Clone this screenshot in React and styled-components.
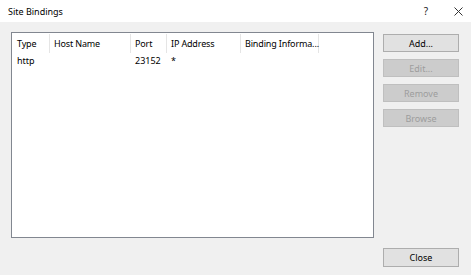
import styled, { createGlobalStyle } from "styled-components";

const GlobalStyle = createGlobalStyle`
  html, body {
    margin: 0;
    padding: 0;
    background: #ffffff;
  }
  body {
    font-family: "Noto Sans", "Open Sans", sans-serif;
    font-size: 9px;
    color: #000;
  }
`;

const Window = styled.div`
  width: 474px;
  height: 278px;
  display: flex;
  flex-direction: column;
  background: #ffffff;
  box-sizing: border-box;
`;

const TitleBar = styled.div`
  height: 22px;
  display: flex;
  align-items: center;
  padding-left: 8px;
  background: #ffffff;
`;

const Title = styled.div`
  flex: 1;
  font-size: 9px;
  color: #000;
`;

const TitleButton = styled.div`
  width: 32px;
  height: 22px;
  display: flex;
  align-items: center;
  justify-content: center;
  font-size: 10px;
  color: #222;
`;

const Body = styled.div`
  height: 253px;
  box-sizing: border-box;
  background: #f0f0f0;
  padding: 10px 12px 0 11px;
  margin-right: 3px;
  display: flex;
  flex-direction: column;
`;

const Main = styled.div`
  display: flex;
  gap: 9px;
`;

const ListBox = styled.div`
  width: 366px;
  height: 206px;
  box-sizing: border-box;
  background: #ffffff;
  border: 1px solid #828790;
  padding: 1px 0 0 1px;
`;

const Row = styled.div`
  display: grid;
  grid-template-columns: 37px 81px 36px 74px 78px;
  height: ${(p) => (p.$header ? "19px" : "15px")};
  align-items: center;
`;

const HeadCell = styled.div`
  height: 19px;
  display: flex;
  align-items: center;
  padding-left: 4px;
  border-right: 1px solid #e5e5e5;
  white-space: nowrap;
  letter-spacing: -0.15px;
`;

const Cell = styled.div`
  padding-left: 4px;
  white-space: nowrap;
`;

const ButtonColumn = styled.div`
  display: flex;
  flex-direction: column;
  gap: 7px;
  padding-top: 2px;
`;

const Button = styled.div`
  width: 76px;
  height: 18px;
  box-sizing: border-box;
  display: flex;
  align-items: center;
  justify-content: center;
  background: ${(p) => (p.$disabled ? "#cccccc" : "#e1e1e1")};
  border: 1px solid ${(p) => (p.$disabled ? "#bfbfbf" : "#adadad")};
  color: ${(p) => (p.$disabled ? "#9d9d9d" : "#000")};
  font-size: 9px;
`;

const Footer = styled.div`
  display: flex;
  justify-content: flex-end;
  padding-top: 10px;
`;

const CloseButton = styled(Button)`
  height: 19px;
`;

const columns = ["Type", "Host Name", "Port", "IP Address", "Binding Informa..."];
const rows = [["http", "", "23152", "*", ""]];

export default function App() {
  return (
    <>
      <GlobalStyle />
      <Window>
        <TitleBar>
          <Title>Site Bindings</Title>
          <TitleButton>?</TitleButton>
          <TitleButton>
            <svg width="9" height="9" viewBox="0 0 9 9">
              <path d="M0.5 0.5 L8.5 8.5 M8.5 0.5 L0.5 8.5" stroke="#333" strokeWidth="1" fill="none" />
            </svg>
          </TitleButton>
        </TitleBar>
        <Body>
          <Main>
            <ListBox>
              <Row $header>
                {columns.map((c) => (
                  <HeadCell key={c}>{c}</HeadCell>
                ))}
              </Row>
              {rows.map((r, i) => (
                <Row key={i}>
                  {r.map((v, j) => (
                    <Cell key={j}>{v}</Cell>
                  ))}
                </Row>
              ))}
            </ListBox>
            <ButtonColumn>
              <Button>Add...</Button>
              <Button $disabled>Edit...</Button>
              <Button $disabled>Remove</Button>
              <Button $disabled>Browse</Button>
            </ButtonColumn>
          </Main>
          <Footer>
            <CloseButton>Close</CloseButton>
          </Footer>
        </Body>
      </Window>
    </>
  );
}
